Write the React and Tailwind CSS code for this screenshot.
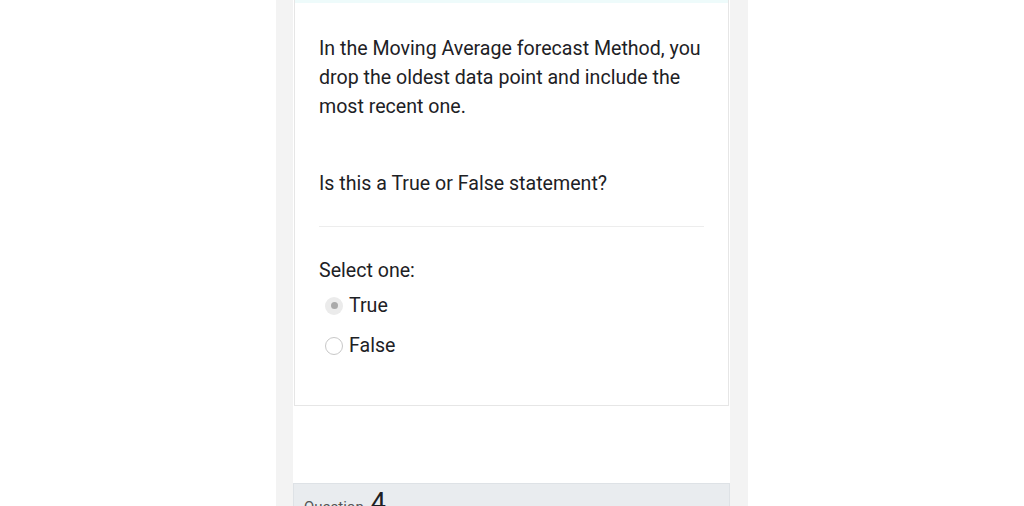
export default function App() {
  return (
    <div className="h-screen overflow-hidden bg-white flex justify-center font-['Roboto',sans-serif] text-[#1d2125]">
      <div className="w-[472px] bg-[#f3f3f3] pl-[17px] pr-[18px]">
        <div className="bg-white flex flex-col">
          <div className="border border-t-0 border-[#e6e6e6] mx-px">
            <div className="h-[3px] bg-[#eefbfb]" />
            <div className="pt-[31px] pb-[45px] px-6 text-[19.6px] leading-[29px]">
              <p>In the Moving Average forecast Method, you drop the oldest data point and include the most recent one.</p>
              <p className="mt-12">Is this a True or False statement?</p>
              <div className="mt-[28px] border-t border-[#ededed]" />
              <p className="mt-[29px]">Select one:</p>
              <div className="mt-[6px] flex flex-col gap-[11px]">
                <label className="flex items-center gap-[6px] pl-[6px]">
                  <span className="w-[18px] h-[18px] rounded-full bg-[#ebebeb] flex items-center justify-center">
                    <span className="w-[7px] h-[7px] rounded-full bg-[#a9a9a9]" />
                  </span>
                  <span>True</span>
                </label>
                <label className="flex items-center gap-[6px] pl-[6px]">
                  <span className="w-[18px] h-[18px] rounded-full border border-[#c8c8c8] bg-white" />
                  <span>False</span>
                </label>
              </div>
            </div>
          </div>
          <div className="h-[77px]" />
          <div className="bg-[#e9ecef] border border-[#dee2e6] h-[60px] px-[10px] pt-[6px] flex items-baseline gap-[7px] leading-none">
            <span className="text-[15px] text-[#555]">Question</span>
            <span className="text-[27px]">4</span>
          </div>
        </div>
      </div>
    </div>
  );
}
